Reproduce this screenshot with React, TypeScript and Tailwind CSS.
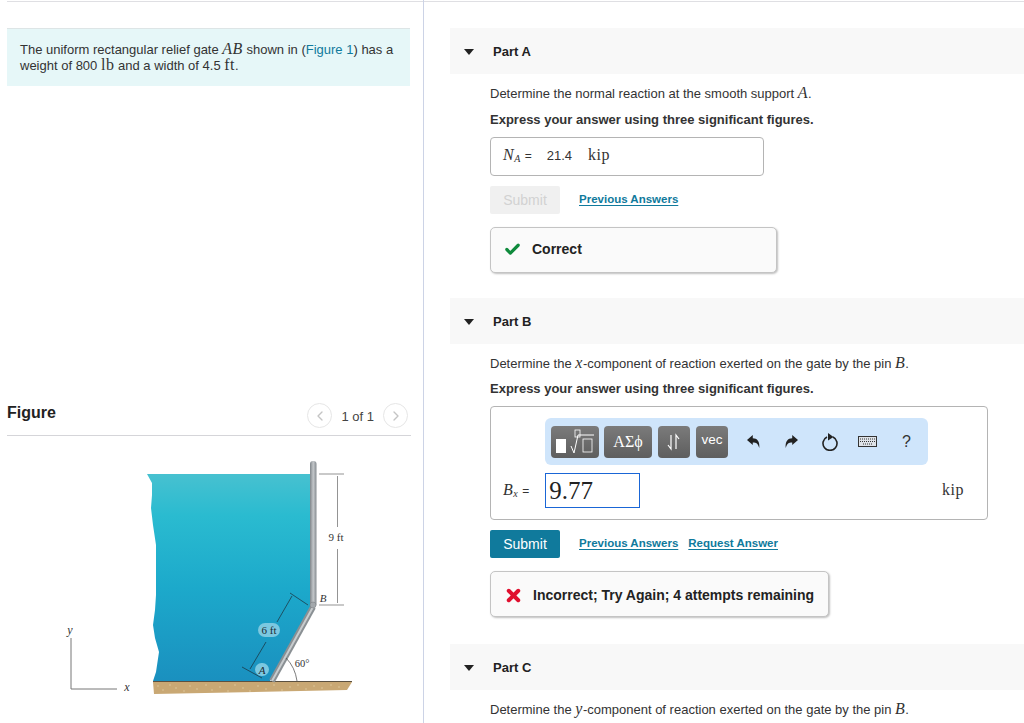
import React from 'react';
import { ChevronLeft, ChevronRight, Check, X } from 'lucide-react';

const M = ({ children, plain }: { children: React.ReactNode; plain?: boolean }) => (
  <span className={`font-['Liberation_Serif',serif] text-[16px] leading-[0] tracking-[0.5px] ${plain ? '' : 'italic'}`}>{children}</span>
);

const PartHeader = ({ label }: { label: string }) => (
  <div className="flex h-[46px] items-center bg-[#f8f8f8] pt-[2px]">
    <span className="ml-[14px] h-0 w-0 border-x-[5px] border-t-[6px] border-x-transparent border-t-[#222]" />
    <span className="ml-[19px] text-[13px] font-bold text-[#222]">{label}</span>
  </div>
);

const Feedback = ({ ok, text, width }: { ok: boolean; text: string; width: string }) => (
  <div className={`flex h-[46px] items-center rounded-[5px] border border-[#c4c4c4] bg-[#fafafa] pl-[13px] shadow-[1px_1px_2px_rgba(0,0,0,0.25)] ${width}`}>
    {ok ? (
      <Check size={17} strokeWidth={4.5} className="mb-[1px] text-[#0f8a3c]" />
    ) : (
      <X size={19} strokeWidth={5} className="mt-[2px] text-[#e0102f]" />
    )}
    <span className={`text-[14px] font-bold text-[#222] ${ok ? 'mb-[2px] ml-[11px]' : 'ml-[10px] mt-[2px]'}`}>{text}</span>
  </div>
);

const TextLink = ({ children }: { children: React.ReactNode }) => (
  <a className="text-[11.5px] font-bold text-[#107a9c] underline underline-offset-2">{children}</a>
);

const ToolBtn = ({ children, width }: { children: React.ReactNode; width: string }) => (
  <div className={`flex h-[32px] items-center justify-center rounded-[4px] bg-gradient-to-b from-[#7b7b7b] to-[#5e5e5e] text-white ${width}`}>
    {children}
  </div>
);

const grains = [
  [158, 686], [163, 690], [170, 685], [176, 688], [184, 691], [190, 686], [197, 689], [206, 685],
  [212, 690], [220, 687], [228, 691], [235, 685], [243, 688], [250, 691], [258, 686], [266, 689],
  [274, 685], [282, 690], [290, 687], [298, 685], [306, 689], [314, 686], [322, 688], [331, 685], [339, 687],
];

function Diagram() {
  return (
    <svg width="423" height="287" viewBox="0 436 423 287" className="block">
      <defs>
        <linearGradient id="water" x1="0" y1="0" x2="0" y2="1">
          <stop offset="0" stopColor="#47c1d0" />
          <stop offset="0.2" stopColor="#2abbd0" />
          <stop offset="0.55" stopColor="#1ca9cb" />
          <stop offset="1" stopColor="#1a90bf" />
        </linearGradient>
        <linearGradient id="bar" x1="0" y1="0" x2="1" y2="0">
          <stop offset="0" stopColor="#7f858a" />
          <stop offset="0.5" stopColor="#c3c7ca" />
          <stop offset="1" stopColor="#858b90" />
        </linearGradient>
      </defs>
      <path d="M147 474 L311 474 L311 606 L270 681 L153 681 L156 672 L159 652 L155 638 L153 625 L155 610 L156 595 L156 545 L153 525 L151 508 L152 495 L152 483 Z" fill="url(#water)" />
      <path d="M153 682 L352 682 L347 690 L154 694 Z" fill="#c9a874" />
      {grains.map(([x, y]) => (
        <circle key={x} cx={x} cy={y} r="0.8" fill="#dcc89c" />
      ))}
      <path d="M153 681.500 H352" stroke="#5c5140" strokeWidth="1" />
      <rect x="310" y="461" width="6.500" height="146" rx="3" fill="url(#bar)" />
      <path d="M313 607 L272 681" stroke="#8a9094" strokeWidth="6" />
      <path d="M313 607 L272 681" stroke="#c8ccce" strokeWidth="2" />
      <circle cx="313" cy="605" r="3" fill="#a3a8ac" stroke="#767b7f" strokeWidth="0.5" />
      {/* 9 ft dimension */}
      <path d="M319 474 H344 M319 605 H344 M337.500 476 V527 M337.500 549 V603" stroke="#666" strokeWidth="0.7" fill="none" />
      <text x="336" y="541" textAnchor="middle" fontFamily="Liberation Serif, serif" fontSize="11" fill="#333">9 ft</text>
      <text x="323" y="602" textAnchor="middle" fontFamily="Liberation Serif, serif" fontSize="11" fontStyle="italic" fill="#333">B</text>
      {/* 6 ft dimension */}
      <path d="M290 593 L308 605 M242 667 L262 678 M292 596 L277 622 M266 642 L250 669" stroke="#1c2c36" strokeWidth="0.7" fill="none" />
      <rect x="258" y="623" width="22" height="14" rx="7" fill="#7cc8e0" />
      <text x="269" y="634" textAnchor="middle" fontFamily="Liberation Serif, serif" fontSize="11" fill="#1b2a33">6 ft</text>
      <rect x="255" y="663" width="14" height="13" rx="6.500" fill="#7cc8e0" />
      <text x="262" y="674" textAnchor="middle" fontFamily="Liberation Serif, serif" fontSize="11" fontStyle="italic" fill="#1b2a33">A</text>
      {/* 60 deg */}
      <path d="M286 658 Q295 667 297 681" stroke="#444" strokeWidth="0.7" fill="none" />
      <text x="302" y="667" textAnchor="middle" fontFamily="Liberation Serif, serif" fontSize="10.500" fill="#333">60°</text>
      {/* axes */}
      <path d="M71 638 V689 H117" stroke="#777" strokeWidth="1" fill="none" />
      <text x="70" y="634" textAnchor="middle" fontFamily="Liberation Serif, serif" fontSize="12" fontStyle="italic" fill="#333">y</text>
      <text x="127" y="691" textAnchor="middle" fontFamily="Liberation Serif, serif" fontSize="12" fontStyle="italic" fill="#333">x</text>
    </svg>
  );
}

export default function App() {
  return (
    <div className="flex h-[723px] w-[1024px] overflow-hidden bg-white font-['Liberation_Sans',Arial,sans-serif] text-[13px] text-[#333]">
      {/* left column */}
      <div className="w-[424px] shrink-0 border-r border-[#ccd3e6] pt-[1px]">
        <div className="ml-[7px] h-[1px] bg-[#dfdfe3]" />
        <div className="ml-[7px] mt-[26px] h-[58px] w-[403px] border-t border-[#dde5e6] bg-[#e6f7f8] px-[13px] pt-[13px] leading-[16px]">
          The uniform rectangular relief gate <M>AB</M> shown in (<span className="text-[#107a9c]">Figure 1</span>) has a weight of 800 <M plain>lb</M> and a width of 4.5 <M plain>ft</M>.
        </div>
        <div className="ml-[7px] mt-[315px] flex h-[35px] w-[404px] items-start justify-between border-b border-[#d5d5d9]">
          <span className="text-[16px] font-bold text-[#222]">Figure</span>
          <div className="mr-[3px] mt-[2px] flex items-center">
            <span className="flex h-[25px] w-[25px] items-center justify-center rounded-full border border-[#e6e6e6] text-[#c4c4c4]"><ChevronLeft size={16} /></span>
            <span className="mx-[9px] mt-[2px] text-[#444]">1 of 1</span>
            <span className="flex h-[25px] w-[25px] items-center justify-center rounded-full border border-[#e6e6e6] text-[#c4c4c4]"><ChevronRight size={16} /></span>
          </div>
        </div>
        <Diagram />
      </div>

      {/* right column */}
      <div className="min-w-0 flex-1 pt-[1px]">
        <div className="h-[1px] bg-[#dfdfe3]" />
        <div className="ml-[26px] mt-[26px]">
          <PartHeader label="Part A" />
          <div className="pl-[40px]">
            <p className="mt-[11px] leading-[18px]">Determine the normal reaction at the smooth support <M>A</M>.</p>
            <p className="mt-[8px] leading-[18px] font-bold">Express your answer using three significant figures.</p>
            <div className="mt-[8px] flex h-[39px] w-[274px] items-center rounded-[4px] border border-[#b4b4b4] pb-[2px] pl-[12px]">
              <M>N<sub className="text-[10px]">A</sub></M>
              <span className="ml-[4px] text-[12px]">=</span>
              <span className="ml-[15px]">21.4</span>
              <span className="ml-[16px]"><M plain>kip</M></span>
            </div>
            <div className="mt-[10px] flex h-[28px] items-center">
              <div className="flex h-[28px] w-[70px] items-center justify-center rounded-[2px] bg-[#f0f0f0] text-[14px] text-[#d2d2d2]">Submit</div>
              <span className="mb-[2px] ml-[19px]"><TextLink>Previous Answers</TextLink></span>
            </div>
            <div className="mt-[13px]"><Feedback ok text="Correct" width="w-[287px]" /></div>
          </div>
        </div>

        <div className="ml-[26px] mt-[25px]">
          <PartHeader label="Part B" />
          <div className="pl-[40px]">
            <p className="mt-[11px] leading-[18px]">Determine the <M>x</M>-component of reaction exerted on the gate by the pin <M>B</M>.</p>
            <p className="mt-[7px] leading-[18px] font-bold">Express your answer using three significant figures.</p>
            <div className="mt-[8px] h-[114px] w-[498px] rounded-[4px] border border-[#b4b4b4] pt-[11px]">
              <div className="ml-[54px] flex h-[47px] w-[383px] items-center rounded-[6px] bg-[#cfe5fb] pl-[6px]">
                <ToolBtn width="w-[48px]">
                  <svg width="42" height="28" viewBox="0 0 42 28" fill="none">
                    <rect x="2" y="11" width="10" height="14" fill="#fff" />
                    <rect x="21" y="2" width="5" height="7" stroke="#fff" strokeWidth="0.8" />
                    <path d="M17 18 L20 25 L24 7 H40" stroke="#fff" strokeWidth="1" />
                    <rect x="29" y="11" width="9" height="13" stroke="#fff" strokeWidth="0.8" />
                  </svg>
                </ToolBtn>
                <div className="ml-[5px]">
                  <ToolBtn width="w-[48px]"><span className="font-['Liberation_Serif',serif] text-[16px]">ΑΣϕ</span></ToolBtn>
                </div>
                <div className="ml-[6px]">
                  <ToolBtn width="w-[32px]">
                    <svg width="16" height="18" viewBox="0 0 16 18" fill="none" stroke="#fff" strokeWidth="1.200">
                      <path d="M5 2 V16 L2 12" />
                      <path d="M10 16 V2 L13 6" />
                    </svg>
                  </ToolBtn>
                </div>
                <div className="ml-[6px]">
                  <ToolBtn width="w-[32px]"><span className="mb-[2px] text-[13.500px]">vec</span></ToolBtn>
                </div>
                <svg className="ml-[19px]" width="13" height="13" viewBox="0 0 18 18" fill="#222"><path d="M0 7 L8 0 V4.500 C14 4.500 18 9 17 18 C15 12 13 10.500 8 10.500 V14 Z" /></svg>
                <svg className="ml-[25px]" width="13" height="13" viewBox="0 0 18 18" fill="#222"><path d="M18 7 L10 0 V4.500 C4 4.500 0 9 1 18 C3 12 5 10.500 10 10.500 V14 Z" /></svg>
                <svg className="ml-[24px]" width="16" height="18" viewBox="0 0 16 18" fill="none"><path d="M5 4 A7 7 0 1 0 11 4" stroke="#222" strokeWidth="1.600" /><path d="M6 0 L11.500 4 L6 7.500 Z" fill="#222" /></svg>
                <svg className="ml-[20px]" width="19" height="11" viewBox="0 0 19 11" fill="none"><rect x="0.500" y="0.500" width="18" height="10" fill="#dfe3e8" stroke="#333" /><path d="M2 3h15M2 5.500h15M5 8h9" stroke="#333" strokeWidth="1" strokeDasharray="1 1" /></svg>
                <span className="ml-[25px] text-[16px] text-[#333]">?</span>
              </div>
              <div className="mt-[8px] flex items-center pl-[12px] pr-[23px]">
                <M>B<sub className="text-[10px]">x</sub></M>
                <span className="ml-[4px] text-[12px]">=</span>
                <div className="ml-[16px] flex h-[35px] w-[95px] items-center border border-[#1a66d6] pl-[3px] font-['Liberation_Serif',serif] text-[25px] leading-none text-[#222]">9.77</div>
                <span className="ml-auto"><M plain>kip</M></span>
              </div>
            </div>
            <div className="mt-[10px] flex h-[28px] items-center">
              <div className="flex h-[28px] w-[70px] items-center justify-center rounded-[2px] bg-[#107a9c] text-[14px] text-white">Submit</div>
              <span className="mb-[2px] ml-[19px]"><TextLink>Previous Answers</TextLink></span>
              <span className="mb-[2px] ml-[10px]"><TextLink>Request Answer</TextLink></span>
            </div>
            <div className="mt-[13px]"><Feedback ok={false} text="Incorrect; Try Again; 4 attempts remaining" width="w-[339px]" /></div>
          </div>
        </div>

        <div className="ml-[26px] mt-[27px]">
          <PartHeader label="Part C" />
          <p className="mt-[11px] pl-[40px] leading-[18px]">Determine the <M>y</M>-component of reaction exerted on the gate by the pin <M>B</M>.</p>
        </div>
      </div>
    </div>
  );
}
